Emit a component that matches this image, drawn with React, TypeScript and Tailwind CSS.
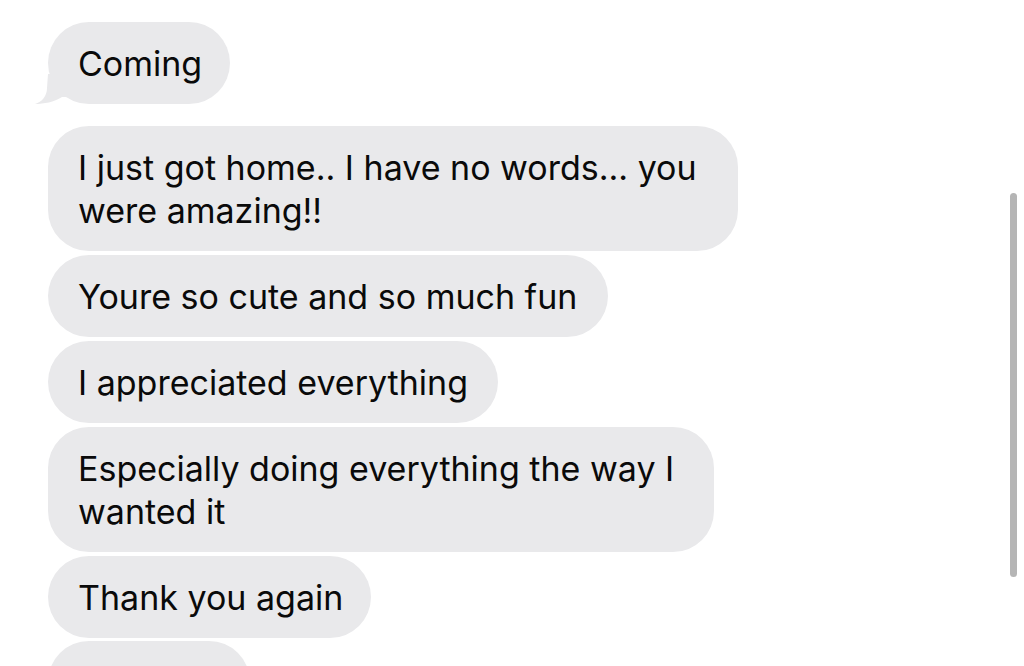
import React from 'react';

interface Msg {
  lines: string[];
  width: number;
  gap: number;
}

const messages: Msg[] = [
  { lines: ['I just got home.. I have no words... you', 'were amazing!!'], width: 690, gap: 22 },
  { lines: ['Youre so cute and so much fun'], width: 560, gap: 4 },
  { lines: ['I appreciated everything'], width: 450, gap: 4 },
  { lines: ['Especially doing everything the way I', 'wanted it'], width: 666, gap: 4 },
  { lines: ['Thank you again'], width: 323, gap: 4 },
  { lines: ['\u00a0'], width: 202, gap: 3 },
];

const Bubble: React.FC<{ msg: Msg }> = ({ msg }) => (
  <div
    className="flex flex-col justify-center rounded-[41px] bg-[#e9e9eb] px-[30px] text-[34px] leading-[43px] text-[#0a0a0a] whitespace-nowrap"
    style={{ width: msg.width, marginTop: msg.gap, height: msg.lines.length > 1 ? 125 : 82 }}
  >
    {msg.lines.map((l, i) => (
      <div key={i}>{l}</div>
    ))}
  </div>
);

const App: React.FC = () => {
  return (
    <div
      className="relative h-[666px] w-[1024px] overflow-hidden bg-white"
      style={{ fontFamily: 'Inter, "Noto Sans", sans-serif' }}
    >
      <div className="flex flex-col items-start pl-[48px] pt-[22px]">
        {/* first bubble with tail */}
        <div className="relative">
          <svg className="absolute left-[-14px] bottom-0" width="40" height="30" viewBox="0 0 40 30">
            <path
              d="M14 0 L13 14 C13 22 8 28 1 30 C10 30 20 28 28 23 L40 23 L40 0 Z"
              fill="#e9e9eb"
            />
          </svg>
          <div className="relative flex h-[82px] w-[182px] items-center rounded-[41px] bg-[#e9e9eb] px-[30px] text-[34px] leading-[43px] text-[#0a0a0a] whitespace-nowrap">
            Coming
          </div>
        </div>
        {messages.map((m, i) => (
          <Bubble key={i} msg={m} />
        ))}
      </div>

      {/* scrollbar */}
      <div className="absolute left-[1010px] top-[193px] h-[384px] w-[7px] rounded-full bg-[#b5b5b5]" />
    </div>
  );
};

export default App;
